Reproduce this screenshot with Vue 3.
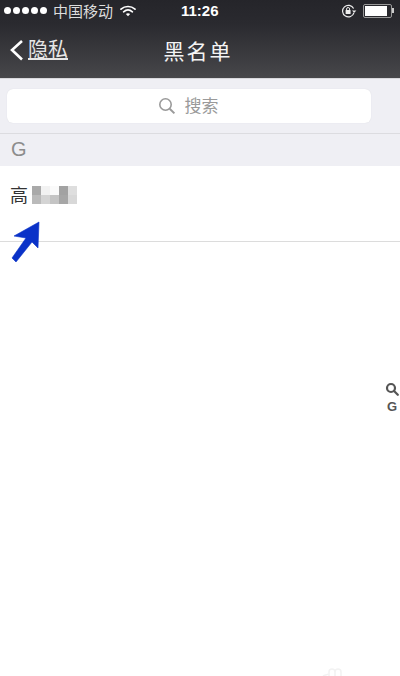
<template>
  <div class="page">
    <header class="top">
      <div class="status">
        <div class="status-left">
          <span class="dots"><i v-for="n in 5" :key="n"></i></span>
          <span class="carrier">中国移动</span>
          <svg class="wifi" width="16" height="12" viewBox="0 0 16 12" fill="none" stroke="#fff" stroke-linecap="round">
            <path d="M1 4.2C5 .6 11 .6 15 4.2" stroke-width="1.7"/>
            <path d="M3.6 6.8C6.2 4.6 9.8 4.6 12.4 6.8" stroke-width="1.7"/>
            <path d="M8 11.2L5.9 9c1.2-.9 3-.9 4.2 0z" fill="#fff" stroke="none"/>
          </svg>
        </div>
        <span class="time">11:26</span>
        <div class="status-right">
          <svg width="16" height="14" viewBox="0 0 16 14" fill="none" stroke="#eee">
            <path d="M13 8.6A5.8 5.8 0 1 1 12.6 4.6" stroke-width="1.2"/>
            <path d="M11 6.4h4.4L13.2 8.8z" fill="#eee" stroke="none"/>
            <rect x="4.6" y="6" width="5" height="4" rx=".6" fill="#eee" stroke="none"/>
            <path d="M5.6 6V5a1.5 1.5 0 0 1 3 0v1" stroke-width="1"/>
          </svg>
          <div class="battery"><div class="level"></div></div>
          <div class="cap"></div>
        </div>
      </div>
      <nav class="nav">
        <a class="back">
          <svg width="15" height="22" viewBox="0 0 15 22" fill="none" stroke="#fff" stroke-width="2.6">
            <path d="M13 2L3 11l10 9.5"/>
          </svg>
          <span>隐私</span>
        </a>
        <h1>黑名单</h1>
      </nav>
    </header>

    <section class="search">
      <div class="search-box">
        <svg width="18" height="18" viewBox="0 0 18 18" fill="none" stroke="#9a9a9a" stroke-width="1.6">
          <circle cx="7.5" cy="7.5" r="5.7"/>
          <path d="M11.7 11.7L16.4 16.4" stroke-width="2"/>
        </svg>
        <span>搜索</span>
      </div>
    </section>

    <div class="section-title">G</div>

    <div class="row">
      <span class="name">高</span>
      <div class="mosaic">
        <i v-for="(c, i) in mosaic" :key="i" :style="{ background: c }"></i>
      </div>
    </div>

    <svg class="arrow" width="30" height="42" viewBox="0 0 30 42">
      <path d="M28 1L3 15 15 17 1 37 5 41 21 21 27 27z" fill="#0a32c8" stroke="#0a32c8" stroke-width=".6" stroke-linejoin="round"/>
    </svg>

    <div class="index">
      <svg width="14" height="14" viewBox="0 0 14 14" fill="none" stroke="#555" stroke-width="2.2">
        <circle cx="6" cy="6" r="4"/>
        <path d="M9 9l3.8 3.8" stroke-linecap="round"/>
      </svg>
      <span>G</span>
    </div>

    <svg class="mark" width="24" height="10" viewBox="0 0 24 10" fill="none" stroke="#f2f2f2" stroke-width="1.5">
      <path d="M1 9c2-1 4-1 5-2M7 9V5c0-4 6-4 6 0v4M13 5c0-4 6-4 6 0v4"/>
    </svg>
  </div>
</template>

<script setup>
const mosaic = [
  '#a9a9a9', '#f2f2f2', '#fafafa', '#a2a2a2', '#dedede',
  '#bababa', '#d4d4d4', '#c4c4c4', '#a6a6a6', '#d8d8d8'
]
</script>

<style>
html, body {
  margin: 0;
  background: #fff;
}
</style>

<style scoped>
.page {
  position: relative;
  width: 400px;
  height: 676px;
  overflow: hidden;
  background: #fff;
  font-family: "Liberation Sans", "Noto Sans CJK SC", sans-serif;
}
.top {
  height: 78px;
  background: linear-gradient(#25252a, #2a2a2f 30%, #47474a);
  color: #fff;
}
.status {
  height: 21px;
  padding: 0 6px 0 4px;
  display: flex;
  align-items: center;
  justify-content: space-between;
  position: relative;
}
.status-left, .status-right {
  display: flex;
  align-items: center;
}
.dots {
  display: flex;
  gap: 2px;
  margin-right: 6px;
}
.dots i {
  width: 7px;
  height: 7px;
  border-radius: 50%;
  background: #fff;
}
.carrier {
  font-size: 15px;
  color: #ddd;
  margin-right: 7px;
}
.time {
  position: absolute;
  left: 181px;
  top: 1px;
  font-size: 15px;
  font-weight: bold;
  line-height: 20px;
}
.status-right svg {
  margin-right: -2px;
}
.battery {
  width: 25px;
  height: 10px;
  margin-left: 8px;
  border: 1px solid #999;
  border-radius: 2px;
  padding: 1px;
}
.level {
  width: 22px;
  height: 10px;
  background: #fff;
}
.cap {
  width: 2px;
  height: 5px;
  background: #ccc;
}
.nav {
  height: 57px;
  display: flex;
  align-items: center;
  justify-content: center;
  position: relative;
}
.nav h1 {
  margin: 0;
  font-size: 21px;
  font-weight: normal;
  letter-spacing: 2px;
  color: #f4f4f4;
  padding-right: 4px;
}
.back {
  position: absolute;
  left: 9px;
  top: 16px;
  display: flex;
  align-items: center;
  gap: 4px;
  color: #e6e6e6;
  font-size: 20px;
  line-height: 26px;
}
.back span {
  text-decoration: underline;
  text-underline-offset: 1px;
}
.search {
  height: 56px;
  box-sizing: border-box;
  padding: 10px 29px 0 7px;
  background: #efeff4;
  border-top: 1px solid #d8d8dc;
  border-bottom: 1px solid #dcdce0;
}
.search-box {
  height: 34px;
  background: #fff;
  border-radius: 6px;
  display: flex;
  align-items: center;
  justify-content: center;
  gap: 9px;
  padding-right: 2px;
  color: #9a9a9a;
  font-size: 17px;
  box-shadow: 0 0 1px #d5d5da;
}
.search-box span {
  padding-bottom: 3px;
}
.section-title {
  height: 32px;
  padding-left: 11px;
  background: #efeff4;
  color: #8c8c8c;
  font-size: 20px;
  line-height: 31px;
}
.row {
  height: 75px;
  border-bottom: 1px solid #dcdcdc;
  padding-left: 10px;
  display: flex;
  align-items: flex-start;
}
.name {
  margin-top: 18px;
  font-size: 18px;
  line-height: 24px;
  color: #333;
  width: 22px;
}
.mosaic {
  margin-top: 20px;
  display: grid;
  grid-template-columns: repeat(5, 9px);
  grid-auto-rows: 9px;
  width: 45px;
  filter: blur(.5px);
}
.arrow {
  position: absolute;
  left: 11px;
  top: 221px;
}
.index {
  position: absolute;
  left: 385px;
  top: 382px;
  width: 14px;
  display: flex;
  flex-direction: column;
  align-items: center;
  gap: 3px;
  color: #555;
  font-size: 13px;
  font-weight: bold;
  line-height: 15px;
}
.mark {
  position: absolute;
  left: 322px;
  top: 667px;
}
</style>
